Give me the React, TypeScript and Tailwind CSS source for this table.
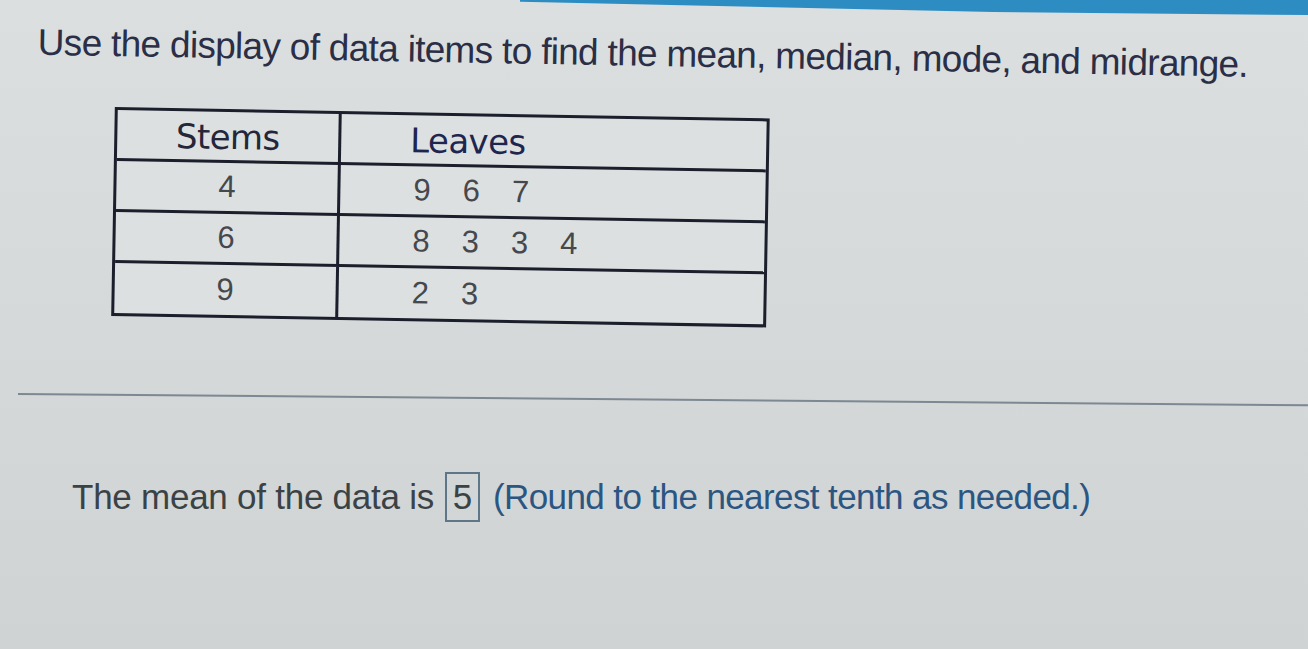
const rows: [string, string[]][] = [
  ["4", ["9", "6", "7"]],
  ["6", ["8", "3", "3", "4"]],
  ["9", ["2", "3"]],
];

export default function App() {
  return (
    <div
      className="w-[1308px] h-[649px] overflow-hidden bg-gradient-to-b from-[#dcdfdf] to-[#cfd3d3] relative"
      style={{ fontFamily: '"Liberation Sans", Arial, sans-serif' }}
    >
      <div className="absolute top-0 left-[520px] right-0 h-[15px] bg-[#2d8cc2] [clip-path:polygon(0_0,100%_0,100%_100%,60%_80%,0_12%)]" />
      <div className="pt-[21px] pl-[38px] text-[37px] text-[#2a2e46] tracking-[-0.7px] leading-[42px] whitespace-nowrap origin-left rotate-[1.05deg]">
        Use the display of data items to find the mean, median, mode, and midrange.
      </div>
      <div className="ml-[113px] mt-[44px] w-[655px] border-[3px] border-[#1b1e2b] bg-[#dde0e0] rotate-[1deg] origin-left">
        <div className="grid grid-cols-[224px_1fr] h-[51px] border-b-[3px] border-[#1b1e2b]">
          <div
            className="border-r-[3px] border-[#1b1e2b] flex items-center justify-center text-[34px] tracking-[-0.6px] text-[#24263a]"
            style={{ fontFamily: '"DejaVu Sans", sans-serif' }}
          >
            Stems
          </div>
          <div
            className="flex items-center pl-[69px] text-[34px] tracking-[-0.6px] text-[#1e2650]"
            style={{ fontFamily: '"DejaVu Sans", sans-serif' }}
          >
            Leaves
          </div>
        </div>
        {rows.map(([s, leaves], i) => (
          <div
            key={i}
            className={`grid grid-cols-[224px_1fr] ${i < 2 ? "h-[51px] border-b-[3px] border-[#1b1e2b]" : "h-[50px]"}`}
          >
            <div className="border-r-[3px] border-[#1b1e2b] flex items-center justify-center text-[31px] text-[#45484d]">
              {s}
            </div>
            <div className="flex items-center pl-[73px] gap-[32px] text-[31px] text-[#45484d]">
              {leaves.map((l, j) => (
                <span key={j}>{l}</span>
              ))}
            </div>
          </div>
        ))}
      </div>
      <div className="mt-[77px] ml-[18px] h-[2px] bg-[#7d8893] rotate-[0.5deg] origin-left" />
      <div className="mt-[77px] ml-[72px] flex items-center h-[50px] text-[35px] text-[#3b4246] whitespace-nowrap">
        <span className="tracking-[-0.25px]">The mean of the data is</span>
        <span className="ml-[11px] w-[35px] h-[50px] border-[2px] border-[#5f7688] flex items-center justify-center text-[#3b4246]">
          5
        </span>
        <span className="ml-[13px] tracking-[-0.6px] text-[#2c5682]">(Round to the nearest tenth as needed.)</span>
      </div>
    </div>
  );
}
